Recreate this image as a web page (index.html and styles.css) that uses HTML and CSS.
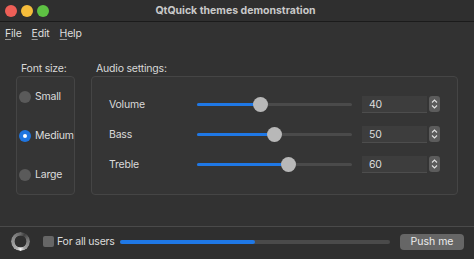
FILE: index.html
```html
<!DOCTYPE html>
<html>
<head>
<meta charset="utf-8">
<link rel="stylesheet" href="styles.css">
</head>
<body>
<div class="window">
  <div class="titlebar">
    <div class="lights">
      <span class="light red"></span>
      <span class="light yellow"></span>
      <span class="light green"></span>
    </div>
    <div class="title">QtQuick themes demonstration</div>
  </div>
  <div class="menubar">
    <span class="menu"><u>F</u>ile</span>
    <span class="menu"><u>E</u>dit</span>
    <span class="menu"><u>H</u>elp</span>
  </div>
  <div class="content">
    <div class="group font-group">
      <div class="group-label">Font size:</div>
      <div class="group-box radios">
        <div class="radio-row"><span class="radio"></span><span>Small</span></div>
        <div class="radio-row"><span class="radio checked"></span><span>Medium</span></div>
        <div class="radio-row"><span class="radio"></span><span>Large</span></div>
      </div>
    </div>
    <div class="group audio-group">
      <div class="group-label">Audio settings:</div>
      <div class="group-box audio">
        <div class="audio-row">
          <span class="row-label">Volume</span>
          <div class="slider"><div class="fill" style="width:41%"></div><div class="handle" style="left:41%"></div></div>
          <div class="spin"><div class="spin-field">40</div><div class="spin-btn"><svg width="7" height="12" viewBox="0 0 7 12"><path d="M1 4.5 L3.5 2 L6 4.5 M1 7.5 L3.5 10 L6 7.5" fill="none" stroke="#e0e0e0" stroke-width="1.1"/></svg></div></div>
        </div>
        <div class="audio-row">
          <span class="row-label">Bass</span>
          <div class="slider"><div class="fill" style="width:50%"></div><div class="handle" style="left:50%"></div></div>
          <div class="spin"><div class="spin-field">50</div><div class="spin-btn"><svg width="7" height="12" viewBox="0 0 7 12"><path d="M1 4.5 L3.5 2 L6 4.5 M1 7.5 L3.5 10 L6 7.5" fill="none" stroke="#e0e0e0" stroke-width="1.1"/></svg></div></div>
        </div>
        <div class="audio-row">
          <span class="row-label">Treble</span>
          <div class="slider"><div class="fill" style="width:59%"></div><div class="handle" style="left:59%"></div></div>
          <div class="spin"><div class="spin-field">60</div><div class="spin-btn"><svg width="7" height="12" viewBox="0 0 7 12"><path d="M1 4.5 L3.5 2 L6 4.5 M1 7.5 L3.5 10 L6 7.5" fill="none" stroke="#e0e0e0" stroke-width="1.1"/></svg></div></div>
        </div>
      </div>
    </div>
  </div>
  <div class="footer">
    <div class="busy"></div>
    <span class="checkbox"></span>
    <span class="check-label">For all users</span>
    <div class="progress"><div class="progress-fill" style="width:50%"></div></div>
    <button class="push">Push me</button>
  </div>
</div>
</body>
</html>
```
FILE: styles.css
```css
html, body {
  margin: 0;
  padding: 0;
  background: #2b2b2b;
}
body {
  font-family: "Inter", "Liberation Sans", sans-serif;
  font-size: 10.5px;
  letter-spacing: -0.2px;
  color: #dcdcdc;
}
.window {
  width: 474px;
  height: 259px;
  background: #323232;
  display: flex;
  flex-direction: column;
  overflow: hidden;
}
.titlebar {
  height: 22px;
  flex: none;
  background: #2f2f2f;
  border-bottom: 1px solid #1b1b1b;
  display: flex;
  align-items: center;
  box-sizing: border-box;
}
.lights {
  display: flex;
  gap: 4px;
  padding-left: 5px;
}
.light {
  width: 12px;
  height: 12px;
  border-radius: 50%;
  display: block;
}
.red { background: #ee5f57; }
.yellow { background: #f6bd3b; }
.green { background: #5ec243; }
.title {
  flex: 1;
  text-align: center;
  font-weight: 700;
  font-size: 10.5px;
  letter-spacing: 0;
  color: #c9c9c9;
  margin-right: 52px;
}
.menubar {
  height: 22px;
  flex: none;
  display: flex;
  align-items: center;
  gap: 10px;
  padding-left: 5px;
  color: #dedede;
}
.menu u {
  text-decoration-color: #9a9a9a;
  text-underline-offset: 2px;
}
.content {
  flex: 1;
  display: flex;
  gap: 16px;
  padding: 18px 16px 0 16px;
}
.group {
  display: flex;
  flex-direction: column;
}
.group-label {
  height: 14px;
  line-height: 14px;
  padding-left: 5px;
  color: #d8d8d8;
}
.group-box {
  height: 119px;
  box-sizing: border-box;
  border: 1px solid #454545;
  border-radius: 4px;
  background: #353535;
}
.font-group { width: 59px; }
.audio-group { width: 367px; }
.radios {
  display: flex;
  flex-direction: column;
  justify-content: space-around;
  padding-left: 2px;
}
.radio-row {
  display: flex;
  align-items: center;
  gap: 4px;
  height: 14px;
}
.radio {
  width: 12px;
  height: 12px;
  border-radius: 50%;
  background: #5a5a5a;
  display: block;
  flex: none;
}
.radio.checked {
  background: #1f75e0;
  position: relative;
}
.radio.checked::after {
  content: "";
  position: absolute;
  left: 4px;
  top: 4px;
  width: 4px;
  height: 4px;
  border-radius: 50%;
  background: #fff;
}
.audio {
  padding: 12px 17px 0 17px;
  display: flex;
  flex-direction: column;
}
.audio-row {
  height: 30px;
  display: flex;
  align-items: center;
}
.row-label {
  width: 88px;
  color: #dadada;
}
.slider {
  width: 155px;
  height: 3px;
  background: #4a4a4a;
  border-radius: 2px;
  position: relative;
}
.fill {
  height: 100%;
  background: #1f78e6;
  border-radius: 2px;
}
.handle {
  position: absolute;
  top: 50%;
  width: 15px;
  height: 15px;
  margin: -7.5px 0 0 -7.5px;
  border-radius: 50%;
  background: #b8b8b8;
}
.spin {
  margin-left: 10px;
  display: flex;
  align-items: center;
  gap: 2px;
}
.spin-field {
  width: 65px;
  height: 17px;
  box-sizing: border-box;
  background: #3d3d3d;
  border-bottom: 1px solid #4d4d4d;
  padding-left: 7px;
  line-height: 17px;
  color: #dedede;
}
.spin-btn {
  width: 11px;
  height: 16px;
  background: #5c5c5c;
  border-radius: 3px;
  display: flex;
  align-items: center;
  justify-content: center;
}
.footer {
  height: 33px;
  flex: none;
  box-sizing: border-box;
  border-top: 1px solid #4a4a4a;
  background: #2f2f2f;
  display: flex;
  align-items: center;
  padding: 0 10px 3px 11px;
  white-space: nowrap;
}
.busy {
  width: 19px;
  height: 19px;
  border-radius: 50%;
  background: conic-gradient(from 30deg, #404040 0deg, #7a7a7a 50deg, #a0a0a0 120deg, #f4f4f4 150deg, #b0b0b0 175deg, #8c8c8c 260deg, #6a6a6a 330deg, #404040 360deg);
  -webkit-mask: radial-gradient(circle, transparent 5.6px, #000 6.2px);
  mask: radial-gradient(circle, transparent 5.6px, #000 6.2px);
  flex: none;
}
.checkbox {
  width: 11px;
  height: 11px;
  border-radius: 2px;
  background: #666;
  margin-left: 13px;
  display: block;
  flex: none;
}
.check-label {
  margin-left: 3px;
  color: #dcdcdc;
  flex: none;
}
.progress {
  margin-left: 5px;
  flex: 1;
  height: 4px;
  background: #4a4a4a;
  border-radius: 2px;
}
.progress-fill {
  height: 100%;
  background: #1f78e6;
  border-radius: 2px;
}
.push {
  margin-left: 10px;
  width: 64px;
  height: 16px;
  flex: none;
  border: none;
  border-radius: 4px;
  background: #666;
  color: #ececec;
  font-family: inherit;
  font-size: 10.5px;
  letter-spacing: 0;
  padding: 0;
}
```
